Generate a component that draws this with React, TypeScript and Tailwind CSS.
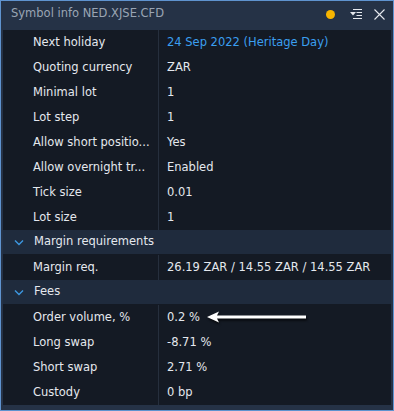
import React from "react"

type Row =
  | { kind: "row"; label: string; value: string; accent?: boolean; arrow?: boolean }
  | { kind: "group"; label: string }

const rows: Row[] = [
  { kind: "row", label: "Next holiday", value: "24 Sep 2022 (Heritage Day)", accent: true },
  { kind: "row", label: "Quoting currency", value: "ZAR" },
  { kind: "row", label: "Minimal lot", value: "1" },
  { kind: "row", label: "Lot step", value: "1" },
  { kind: "row", label: "Allow short positio...", value: "Yes" },
  { kind: "row", label: "Allow overnight tr...", value: "Enabled" },
  { kind: "row", label: "Tick size", value: "0.01" },
  { kind: "row", label: "Lot size", value: "1" },
  { kind: "group", label: "Margin requirements" },
  { kind: "row", label: "Margin req.", value: "26.19 ZAR / 14.55 ZAR / 14.55 ZAR" },
  { kind: "group", label: "Fees" },
  { kind: "row", label: "Order volume, %", value: "0.2 %", arrow: true },
  { kind: "row", label: "Long swap", value: "-8.71 %" },
  { kind: "row", label: "Short swap", value: "2.71 %" },
  { kind: "row", label: "Custody", value: "0 bp" },
]

function Chevron() {
  return (
    <svg width="10" height="7" viewBox="0 0 10 7" className="shrink-0">
      <path d="M1 1.5 L5 5.5 L9 1.5" fill="none" stroke="#3d97e0" strokeWidth="1.4" />
    </svg>
  )
}

function MenuIcon() {
  return (
    <svg width="12" height="11" viewBox="0 0 12 11">
      <path d="M0 3 H6 L3 6.5 Z" fill="#e6e9ee" />
      <path d="M3 0.5 H12 M6.5 3.5 H12 M6.5 6.5 H12 M3 9.5 H12" stroke="#e6e9ee" strokeWidth="1" />
    </svg>
  )
}

function CloseIcon() {
  return (
    <svg width="11" height="11" viewBox="0 0 11 11">
      <path d="M0.5 0.5 L10.5 10.5 M10.5 0.5 L0.5 10.5" stroke="#e6e9ee" strokeWidth="1.1" />
    </svg>
  )
}

function Arrow() {
  return (
    <svg width="106" height="16" viewBox="0 0 106 16" className="absolute left-[200px] top-[4px] drop-shadow-[1px_2px_1px_rgba(0,0,0,0.7)]">
      <path d="M4 8 L16 2.5 L14 6.5 H103 V9.5 H14 L16 13.5 Z" fill="#ffffff" />
    </svg>
  )
}

export default function App() {
  return (
    <div
      className="w-[394px] h-[411px] bg-[#253246] border border-[#5f93cf] flex flex-col overflow-hidden"
      style={{ fontFamily: '"DejaVu Sans", Verdana, sans-serif' }}
    >
      {/* title bar */}
      <div className="h-[29px] shrink-0 flex items-center pb-[3px] pl-[10px] pr-[8px]">
        <span className="text-[11.5px] text-[#9aa5b4]">Symbol info NED.XJSE.CFD</span>
        <div className="ml-auto flex items-center">
          <span className="w-[9px] h-[9px] rounded-full bg-[#f7b500]" />
          <span className="ml-[15px] flex"><MenuIcon /></span>
          <span className="ml-[12px] flex"><CloseIcon /></span>
        </div>
      </div>

      {/* table */}
      <div className="mx-[2px] bg-[#141a24] flex flex-col">
        {rows.map((r, i) =>
          r.kind === "group" ? (
            <div key={i} className="h-[25px] bg-[#1f2b3d] flex items-center gap-[10px] pl-[11px] border-b border-[#141a24]">
              <Chevron />
              <span className="text-[11.5px] text-[#e4e8ee]">{r.label}</span>
            </div>
          ) : (
            <div key={i} className="h-[25px] flex items-center relative">
              <div className="w-[156px] h-full flex items-center pl-[30px] border-r border-[#262f3d] text-[11.5px] text-[#e4e8ee] whitespace-nowrap">
                {r.label}
              </div>
              <div className={`pl-[8px] text-[11.5px] whitespace-nowrap ${r.accent ? "text-[#3b9ff0]" : "text-[#e4e8ee]"}`}>
                {r.value}
              </div>
              {r.arrow && <Arrow />}
            </div>
          )
        )}
      </div>
    </div>
  )
}
